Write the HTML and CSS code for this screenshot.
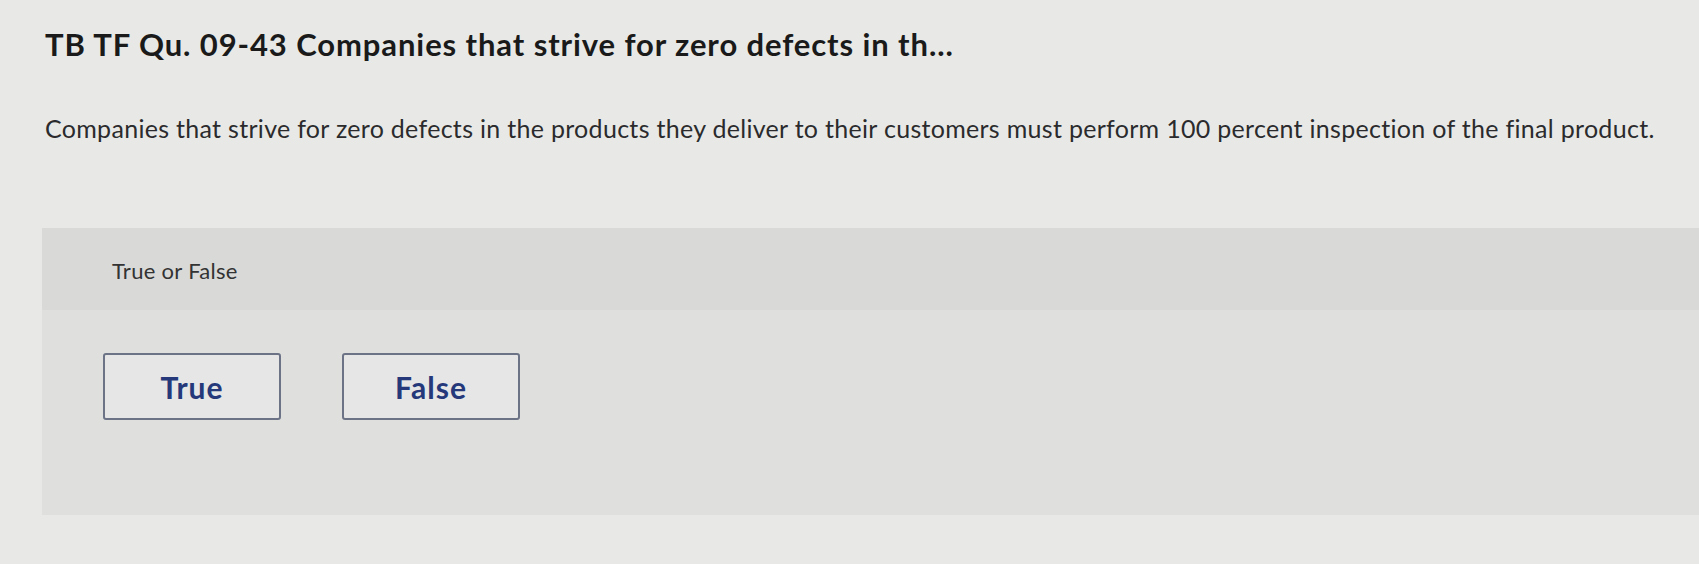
FILE: index.html
```html
<!DOCTYPE html>
<html lang="en">
<head>
    <meta charset="UTF-8">
    <meta name="viewport" content="width=device-width, initial-scale=1.0">
    <title>TB TF Qu. 09-43</title>
    <link rel="stylesheet" href="styles.css">
</head>
<body>
    <div class="question">
        <h1 class="question-title">TB TF Qu. 09-43 Companies that strive for zero defects in th...</h1>
        <p class="question-text">Companies that strive for zero defects in the products they deliver to their customers must perform 100 percent inspection of the final product.</p>
    </div>

    <div class="answer-panel">
        <div class="answer-head">True or False</div>
        <div class="answer-body">
            <button class="choice">True</button>
            <button class="choice">False</button>
        </div>
    </div>
</body>
</html>
```

FILE: styles.css
```css
body {
    font-family: Lato, "Open Sans", Arial, sans-serif;
    background: #e8e9e7;
    color: #1f1f1f;
    margin: 0;
    height: 564px;
    overflow: hidden;
}
.question {
    padding: 0 0 0 45px;
}
.question-title {
    font-size: 31px;
    font-weight: 700;
    letter-spacing: 0.9px;
    line-height: 40px;
    margin: 0;
    padding-top: 24px;
    color: #1a1a1a;
}
.question-text {
    font-size: 25px;
    letter-spacing: 0.3px;
    line-height: 30px;
    white-space: nowrap;
    margin: 0;
    padding-top: 49px;
    color: #2b2b2d;
}
.answer-panel {
    margin: 85px 0 0 42px;
}
.answer-head {
    background: #d9dad8;
    height: 79px;
    padding: 3px 0 0 70px;
    line-height: 79px;
    font-size: 22px;
    letter-spacing: 0.3px;
    color: #333;
}
.answer-body {
    background: #dfe0de;
    height: 205px;
    padding: 43px 0 0 61px;
    box-sizing: border-box;
    display: flex;
    gap: 61px;
    align-items: flex-start;
}
.choice {
    width: 178px;
    height: 67px;
    background: #e5e6e5;
    border: 2px solid #6c7386;
    border-radius: 3px;
    font-family: inherit;
    font-size: 30px;
    font-weight: 700;
    letter-spacing: 1px;
    color: #24387a;
    cursor: pointer;
}
```
